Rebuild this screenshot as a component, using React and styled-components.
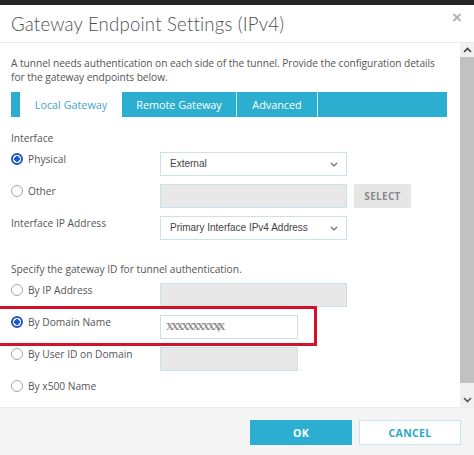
import React from "react";
import styled, { createGlobalStyle } from "styled-components";

const Global = createGlobalStyle`
  html, body { margin: 0; padding: 0; background: #2b2b2b; }
  body { font-family: "Open Sans", "Liberation Sans", sans-serif; }
  * { box-sizing: border-box; }
`;

const Page = styled.div`
  width: 474px;
  height: 455px;
  overflow: hidden;
  padding-top: 5px;
  background: #262626;
`;

const Modal = styled.div`
  width: 474px;
  height: 450px;
  background: #fff;
  display: flex;
  flex-direction: column;
`;

const Header = styled.div`
  height: 38px;
  border-bottom: 1px solid #e9e9e9;
  display: flex;
  align-items: center;
  justify-content: space-between;
  padding: 0 12px 0 11px;
`;

const Title = styled.h1`
  margin: 0;
  font-family: "Lato", "Open Sans", sans-serif;
  font-weight: 300;
  font-size: 18.6px;
  color: #4f4f4f;
  letter-spacing: 0.2px;
`;

const Close = styled.span`
  font-family: "Liberation Sans", sans-serif;
  font-size: 17px;
  font-weight: 700;
  color: #b3b3b3;
  margin-top: -12px;
`;

const Body = styled.div`
  height: 364px;
  display: flex;
`;

const Content = styled.div`
  position: relative;
  flex: 1;
  overflow: hidden;
  padding: 13px 13px 0 11px;
  color: #555;
  font-size: 10.2px;
  line-height: 14px;
`;

const Scrollbar = styled.div`
  width: 14px;
  display: flex;
  flex-direction: column;
  background: #f1f1f1;
`;

const ScrollBtn = styled.div`
  height: 14px;
  display: flex;
  align-items: center;
  justify-content: center;
  color: #555;
`;

const Thumb = styled.div`
  height: 326px;
  background: #c1c1c1;
`;

const Track = styled.div`
  flex: 1;
`;

const Desc = styled.p`
  margin: 0 0 8px;
  letter-spacing: -0.05px;
`;

const TabBar = styled.div`
  height: 25px;
  background: #2caed0;
  display: flex;
  padding-left: 9px;
  width: 436px;
`;

const Tab = styled.div`
  width: ${(p) => p.$w}px;
  display: flex;
  align-items: center;
  justify-content: center;
  font-size: 10.8px;
  color: ${(p) => (p.$active ? "#45a6c9" : "#fff")};
  background: ${(p) => (p.$active ? "#fff" : "transparent")};
  border-right: ${(p) => (p.$divider ? "1px solid #bfe6f0" : "none")};
`;

const Section = styled.div`
  margin-top: ${(p) => p.$mt}px;
  display: flex;
  flex-direction: column;
  gap: 8px;
`;

const Heading = styled.div`
  margin-bottom: -1px;
`;

const Row = styled.div`
  display: flex;
  align-items: flex-start;
  min-height: ${(p) => (p.$short ? 14 : 24)}px;
`;

const LabelCell = styled.label`
  width: 149px;
  display: flex;
  align-items: center;
  gap: 5px;
  height: 14px;
  font-size: 10.2px;
`;

const Radio = styled.span`
  width: 12px;
  height: 12px;
  border-radius: 50%;
  flex: none;
  border: ${(p) => (p.$on ? "2px solid #1f57c9" : "1px solid #a5a5a5")};
  background: ${(p) => (p.$on ? "radial-gradient(circle, #1f57c9 0 2.6px, #fff 3px)" : "#fff")};
`;

const Field = styled.div`
  width: ${(p) => p.$w}px;
  height: 24px;
  border: 1px solid #c7e3e9;
  background: ${(p) => (p.$disabled ? "#e8e8e8" : "#fff")};
  display: flex;
  align-items: center;
  justify-content: space-between;
  padding: 0 8px 0 9px;
  font-family: "Liberation Sans", Arial, sans-serif;
  font-size: 10px;
  color: #444;
`;

const Masked = styled.span`
  font-family: "Liberation Serif", serif;
  font-size: 10.5px;
  font-weight: 700;
  color: #8a8a8a;
  letter-spacing: -2.4px;
  margin-left: -4px;
`;

const GrayBtn = styled.div`
  margin-left: 7px;
  width: 57px;
  height: 24px;
  background: #e6e6e6;
  color: #8a8a8a;
  font-weight: 700;
  font-size: 10px;
  display: flex;
  align-items: center;
  justify-content: center;
  letter-spacing: 0.3px;
`;

const Annotation = styled.div`
  position: absolute;
  left: -10px;
  top: 263px;
  width: 327px;
  height: 40px;
  border: 3px solid #d3112a;
  pointer-events: none;
`;

const Footer = styled.div`
  flex: 1;
  background: #f4f4f4;
  border-top: 1px solid #ececec;
  display: flex;
  justify-content: flex-end;
  align-items: flex-start;
  gap: 7px;
  padding: 12px 13px 0 0;
`;

const Button = styled.div`
  width: 102px;
  height: 25px;
  display: flex;
  align-items: center;
  justify-content: center;
  font-weight: 700;
  font-size: 10.5px;
  letter-spacing: 0.3px;
  background: ${(p) => (p.$primary ? "#2caed0" : "#fff")};
  color: ${(p) => (p.$primary ? "#fff" : "#2ba7ca")};
  border: 1px solid ${(p) => (p.$primary ? "#2caed0" : "#c9e6ee")};
`;

const Chevron = ({ up }) => (
  <svg width="9" height="6" viewBox="0 0 9 6">
    <path
      d={up ? "M1 5 L4.5 1.5 L8 5" : "M1 1 L4.5 4.5 L8 1"}
      fill="none"
      stroke={up ? "#444" : "#555"}
      strokeWidth="1.6"
    />
  </svg>
);

const SelectChevron = () => (
  <svg width="8" height="5" viewBox="0 0 8 5">
    <path d="M1 1 L4 4 L7 1" fill="none" stroke="#666" strokeWidth="1.2" />
  </svg>
);

const Option = ({ on, children }) => (
  <LabelCell>
    <Radio $on={on} />
    {children}
  </LabelCell>
);

export default function App() {
  return (
    <Page>
      <Global />
      <Modal>
        <Header>
          <Title>Gateway Endpoint Settings (IPv4)</Title>
          <Close>×</Close>
        </Header>
        <Body>
          <Content>
            <Desc>
              A tunnel needs authentication on each side of the tunnel. Provide the configuration details
              for the gateway endpoints below.
            </Desc>
            <TabBar>
              <Tab $w={102} $active>Local Gateway</Tab>
              <Tab $w={115} $divider>Remote Gateway</Tab>
              <Tab $w={81} $divider>Advanced</Tab>
            </TabBar>

            <Section $mt={14}>
              <Heading>Interface</Heading>
              <Row>
                <Option on>Physical</Option>
                <Field $w={187}>
                  External
                  <SelectChevron />
                </Field>
              </Row>
              <Row>
                <Option>Other</Option>
                <Field $w={187} $disabled />
                <GrayBtn>SELECT</GrayBtn>
              </Row>
              <Row>
                <LabelCell>Interface IP Address</LabelCell>
                <Field $w={187}>
                  Primary Interface IPv4 Address
                  <SelectChevron />
                </Field>
              </Row>
            </Section>

            <Section $mt={22}>
              <Heading>Specify the gateway ID for tunnel authentication.</Heading>
              <Row>
                <Option>By IP Address</Option>
                <Field $w={187} $disabled />
              </Row>
              <Row>
                <Option on>By Domain Name</Option>
                <Field $w={138}>
                  <Masked>XXXXXXXXXX|X</Masked>
                </Field>
              </Row>
              <Row>
                <Option>By User ID on Domain</Option>
                <Field $w={138} $disabled />
              </Row>
              <Row $short>
                <Option>By x500 Name</Option>
              </Row>
            </Section>
            <Annotation />
          </Content>
          <Scrollbar>
            <ScrollBtn>
              <Chevron up />
            </ScrollBtn>
            <Thumb />
            <Track />
            <ScrollBtn>
              <Chevron />
            </ScrollBtn>
          </Scrollbar>
        </Body>
        <Footer>
          <Button $primary>OK</Button>
          <Button>CANCEL</Button>
        </Footer>
      </Modal>
    </Page>
  );
}
